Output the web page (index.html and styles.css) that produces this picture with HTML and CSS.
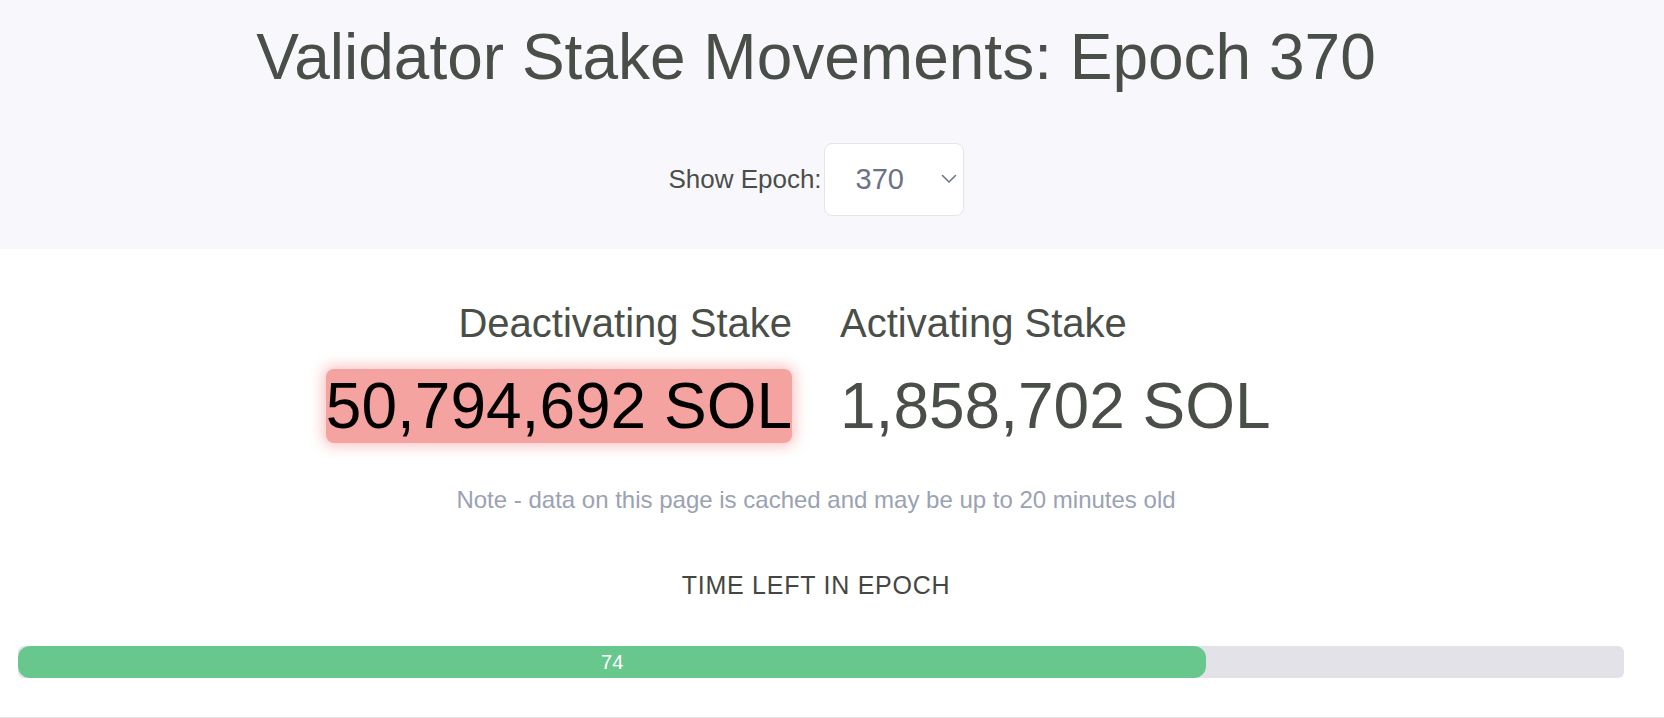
FILE: index.html
```html
<!DOCTYPE html>
<html lang="en">
<head>
<meta charset="utf-8">
<title>Validator Stake Movements</title>
<link rel="stylesheet" href="styles.css">
</head>
<body>
<header class="hero">
  <div class="hero-inner">
    <h1 class="title">Validator Stake Movements: Epoch 370</h1>
    <div class="epoch-picker">
      <label class="epoch-label" for="epoch">Show Epoch:</label>
      <span class="select-wrap">
        <select id="epoch" class="epoch-select">
          <option>370</option>
        </select>
        <svg class="chevron" width="16" height="10" viewBox="0 0 16 10" aria-hidden="true">
          <path d="M1.5 1.5 L8 8 L14.5 1.5" fill="none" stroke="#6b7280" stroke-width="1.5" stroke-linecap="round" stroke-linejoin="round"/>
        </svg>
      </span>
    </div>
  </div>
</header>
<main class="content">
  <section class="stats">
    <div class="stat stat-left">
      <h2 class="stat-title">Deactivating Stake</h2>
      <div class="stat-value"><span class="highlight">50,794,692 SOL</span></div>
    </div>
    <div class="stat stat-right">
      <h2 class="stat-title">Activating Stake</h2>
      <div class="stat-value">1,858,702 SOL</div>
    </div>
  </section>
  <p class="note">Note - data on this page is cached and may be up to 20 minutes old</p>
  <h3 class="time-title">TIME LEFT IN EPOCH</h3>
  <div class="progress">
    <div class="progress-fill" style="width:74%">74</div>
  </div>
</main>
<div class="divider"></div>
</body>
</html>
```
FILE: styles.css
```css
* { box-sizing: border-box; }
html, body { margin: 0; padding: 0; }
body {
  font-family: "Liberation Sans", Arial, Helvetica, sans-serif;
  color: #4a4e48;
  background: #ffffff;
  height: 718px;
  overflow: hidden;
}
.hero {
  background: #f8f8fc;
  padding: 20px 0 33px;
}
.hero-inner,
.content {
  padding-right: 32px;
  text-align: center;
}
.title {
  margin: 0;
  font-size: 64px;
  line-height: 74.5px;
  font-weight: 400;
  color: #4a4e48;
}
.epoch-picker {
  margin-top: 48px;
  display: flex;
  justify-content: center;
  align-items: center;
}
.epoch-label {
  font-size: 26px;
  line-height: 30px;
  color: #4a4e48;
  margin-right: 2px;
}
.select-wrap {
  position: relative;
  display: inline-block;
}
.epoch-select {
  appearance: none;
  -webkit-appearance: none;
  width: 140px;
  height: 73px;
  padding: 0 0 0 31px;
  border: 1px solid #e4e5ea;
  border-radius: 8px;
  background: #ffffff;
  font-family: "Liberation Sans", Arial, Helvetica, sans-serif;
  font-size: 29px;
  color: #6b7383;
  outline: none;
}
.chevron {
  position: absolute;
  right: 7px;
  top: 31px;
  pointer-events: none;
}
.content {
  padding-top: 51px;
}
.stats {
  display: grid;
  grid-template-columns: 1fr 1fr;
  column-gap: 48px;
}
.stat-left { text-align: right; }
.stat-right { text-align: left; }
.stat-title {
  margin: 0;
  font-size: 40px;
  line-height: 46px;
  font-weight: 400;
  color: #4a4e48;
}
.stat-value {
  margin-top: 23px;
  font-size: 64px;
  line-height: 74px;
  height: 74px;
  color: #4a4e48;
}
.highlight {
  display: inline-block;
  background: #f4a3a1;
  color: #000000;
  border-radius: 8px;
  box-shadow: 0 0 14px 3px rgba(242, 120, 118, 0.45);
}
.note {
  margin: 43px 0 0;
  font-size: 24px;
  line-height: 28px;
  color: #9aa2b3;
}
.time-title {
  margin: 57px 0 0;
  font-size: 25px;
  line-height: 29px;
  font-weight: 400;
  letter-spacing: 0.03em;
  color: #444642;
}
.progress {
  margin: 46px 8px 0 18px;
  height: 32px;
  background: #e2e2e8;
  border-radius: 6px;
  display: flex;
}
.progress-fill {
  height: 32px;
  background: #68c78d;
  border-radius: 12px;
  color: #ffffff;
  font-size: 20px;
  line-height: 32px;
  text-align: center;
}
.divider {
  margin-top: 39px;
  height: 1px;
  background: #e5e6ea;
}
```
